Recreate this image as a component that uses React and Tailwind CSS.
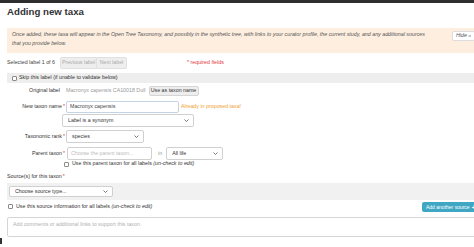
const Chevron = () => (
  <svg width="5" height="3" viewBox="0 0 10 6" className="shrink-0">
    <path d="M1 1l4 4 4-4" fill="none" stroke="#555" strokeWidth="1.6" />
  </svg>
);

function Select({ value, className }) {
  return (
    <div className={`flex items-center justify-between bg-white border border-[#d0d0d0] rounded-[2px] pl-[5px] pr-[4px] ${className}`}>
      <span className="text-[#333]">{value}</span>
      <Chevron />
    </div>
  );
}

const Box = () => <span className="w-[5px] h-[5px] border border-[#8a8a8a] rounded-[1px] bg-white shrink-0" />;

const Req = () => <span className="text-[#e5383b] ml-[1px]">*</span>;

export default function App() {
  return (
    <div className="w-[474px] h-[247px] overflow-hidden bg-white text-[#333] font-['Liberation_Sans',Arial,sans-serif] text-[5.3px] leading-none">
      <div className="h-[3px] bg-[#2e2e2e]" />
      <div className="w-[500px] pl-[7px]">
        <h1 className="h-[22px] pt-[3px] text-[9.7px] leading-[12px] font-bold text-[#333]">Adding new taxa</h1>

        {/* notice */}
        <div className="mt-[3px] h-[25px] bg-[#fdeee0] flex">
          <p className="w-[441px] pl-[5px] pt-[2px] italic leading-[9px] text-[#555] whitespace-nowrap">
            Once added, these taxa will appear in the Open Tree Taxonomy, and possibly in the synthetic tree, with links to your curator profile, the current study, and any additional sources
            <br />
            that you provide below.
          </p>
          <div className="ml-[4px] mt-[3px] h-[10px] px-[3px] flex items-center bg-white border border-[#ddd] rounded-[2px] italic text-[#555]">Hide «</div>
        </div>

        {/* label navigation */}
        <div className="mt-[3px] h-[13px] flex items-center">
          <span className="text-[#444]">Selected label 1 of 6</span>
          <div className="ml-[5px] flex h-[12px]">
            <div className="w-[37px] flex items-center justify-center bg-[#eeeeee] border border-[#e0e0e0] text-[#aaa] rounded-l-[2px]">Previous label</div>
            <div className="w-[30px] flex items-center justify-center bg-[#eeeeee] border border-l-0 border-[#e0e0e0] text-[#aaa] rounded-r-[2px]">Next label</div>
          </div>
          <span className="ml-[60px] text-[#e5383b]">* required fields</span>
        </div>

        <div className="mt-[4px] h-[10px] bg-[#eeeeee] flex items-center pl-[5px] gap-[2px]">
          <Box />
          <span>Skip this label (if unable to validate below)</span>
        </div>

        {/* original label */}
        <div className="mt-[3px] h-[10px] flex items-center">
          <span className="w-[53px] text-right">Original label</span>
          <span className="ml-[6px] text-[#999]">Macronyx capensis CA10018 Dull</span>
          <div className="ml-[3px] h-[10px] w-[50px] flex items-center justify-center bg-[#eeeeee] border border-[#d5d5d5] rounded-[2px]">Use as taxon name</div>
        </div>

        {/* new taxon name */}
        <div className="mt-[5px] h-[12px] flex items-center">
          <span className="w-[58px] text-right">New taxon name<Req /></span>
          <div className="ml-[1px] w-[113px] h-[12px] flex items-center pl-[3px] border border-[#c3d2e4] rounded-[2px] text-[#444]">Macronyx capensis</div>
          <span className="ml-[2px] text-[#f0a030] whitespace-nowrap">Already in proposed taxa!</span>
        </div>

        <Select value="Label is a synonym" className="mt-[1px] ml-[55px] w-[132px] h-[13px]" />

        {/* rank */}
        <div className="mt-[3px] h-[13px] flex items-center">
          <span className="w-[58px] text-right">Taxonomic rank<Req /></span>
          <Select value="species" className="ml-[1px] w-[78px] h-[13px]" />
        </div>

        {/* parent */}
        <div className="mt-[4px] h-[13px] flex items-center">
          <span className="w-[58px] text-right">Parent taxon<Req /></span>
          <div className="ml-[2px] w-[85px] h-[13px] flex items-center pl-[3px] border border-[#d0d0d0] rounded-[2px] text-[#bbb]">Choose the parent taxon...</div>
          <span className="ml-[6px] text-[#999]">in</span>
          <Select value="All life" className="ml-[4px] w-[57px] h-[13px]" />
        </div>

        <div className="h-[8px] flex items-center pl-[57px] gap-[3px]">
          <Box />
          <span>Use this parent taxon for all labels <span className="italic">(un-check to edit)</span></span>
        </div>

        {/* sources */}
        <div className="mt-[4px] h-[10px] flex items-center">
          Source(s) for this taxon<Req />
        </div>
        <div className="mt-[1px] h-[17px] bg-[#f1f1f1] pl-[2px] pt-[3px]">
          <Select value="Choose source type..." className="w-[104px] h-[11px]" />
        </div>

        <div className="mt-[2px] w-[471px] h-[10px] flex items-center justify-between">
          <div className="flex items-center gap-[3px] pl-[1px]">
            <Box />
            <span>Use this source information for all labels <span className="italic">(un-check to edit)</span></span>
          </div>
          <div className="h-[10px] w-[56px] flex items-center pl-[4px] gap-[2px] bg-[#3fa7c4] text-white text-[5px] rounded-[2px] whitespace-nowrap">
            Add another source <span className="font-bold text-[7px]">+</span>
          </div>
        </div>

        <div className="mt-[5px] h-[20px] border border-[#d5d5d5] rounded-[2px] pl-[5px] pt-[4px] text-[#b0b0b0]">
          Add comments or additional links to support this taxon.
        </div>
        <div className="-ml-[7px] mt-[1px] w-[2px] h-[6px] bg-[#333]" />
      </div>
    </div>
  );
}
